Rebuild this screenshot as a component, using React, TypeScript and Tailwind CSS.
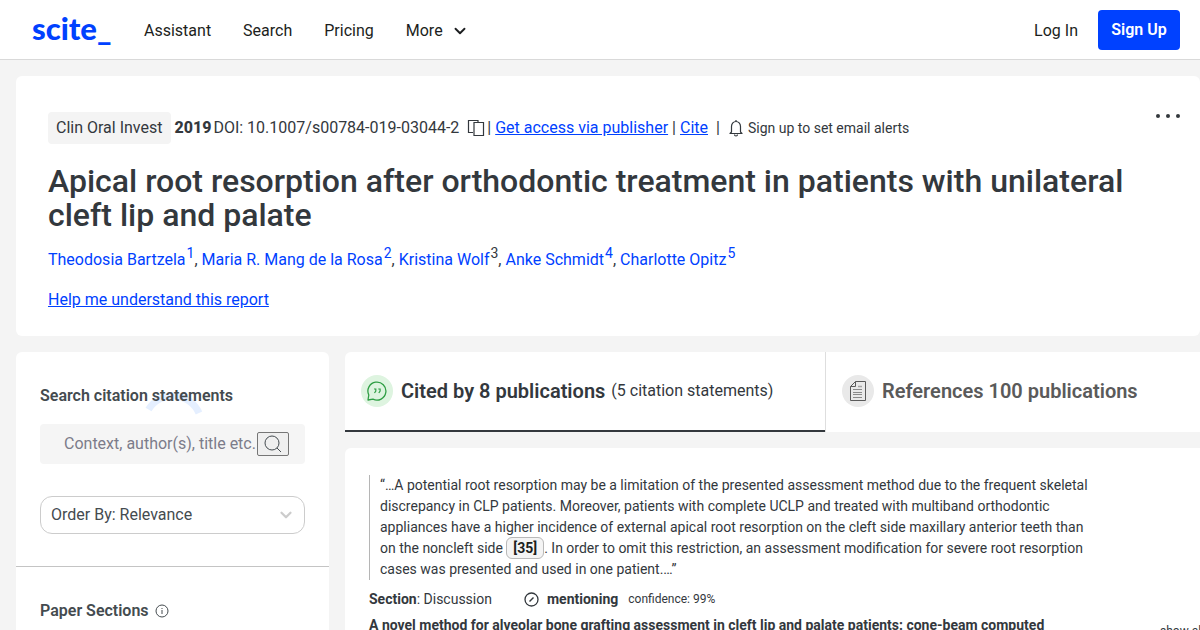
import { ChevronDown } from 'lucide-react';

const navLinks = ['Assistant', 'Search', 'Pricing'];

const authors = [
  { name: 'Theodosia Bartzela', ref: '1', linked: true },
  { name: 'Maria R. Mang de la Rosa', ref: '2', linked: true },
  { name: 'Kristina Wolf', ref: '3', linked: false },
  { name: 'Anke Schmidt', ref: '4', linked: true },
  { name: 'Charlotte Opitz', ref: '5', linked: true },
];

export default function App() {
  return (
    <div className="min-h-screen bg-[#f4f4f4] font-['Roboto',sans-serif] text-base text-[#33383d]">
      <Header />
      <main className="flex flex-col gap-4 pt-4 pl-4">
        <PaperCard />
        <div className="flex gap-4">
          <Sidebar />
          <section className="flex min-w-0 flex-1 flex-col gap-4">
            <Tabs />
            <Citation />
          </section>
        </div>
      </main>
    </div>
  );
}

function Header() {
  return (
    <header className="flex h-[60px] items-center border-b border-[#d9d9d9] bg-white pr-5 pl-8 text-[#1c1e20]">
      <a href="#" className="mr-8 w-20 pb-1 font-['Lato',sans-serif] text-[31px] leading-8 font-black text-[#0041ff]">
        scite_
      </a>
      <nav className="flex flex-1 items-center gap-8 pt-[2px]">
        {navLinks.map((label) => (
          <a key={label} href="#">
            {label}
          </a>
        ))}
        <button className="flex items-center gap-2">
          More
          <ChevronDown size={18} strokeWidth={2.5} />
        </button>
      </nav>
      <a href="#" className="mr-5 pt-[2px]">
        Log In
      </a>
      <button className="h-10 w-[82px] rounded bg-[#0041ff] font-semibold text-white">Sign Up</button>
    </header>
  );
}

function PaperCard() {
  return (
    <section className="rounded-md bg-white px-8 pt-9 pb-6">
      <div className="flex items-center">
        <span className="mr-1 rounded bg-[#f4f4f4] px-2 py-1">Clin Oral Invest</span>
        <strong className="mr-[2px] font-extrabold">2019</strong>
        <span>DOI: 10.1007/s00784-019-03044-2</span>
        <button className="ml-2" aria-label="Copy DOI">
          <CopyIcon />
        </button>
        <span className="mr-1 ml-[2px]">|</span>
        <a href="#" className="text-[#0041ff] underline">
          Get access via publisher
        </a>
        <span className="mx-1">|</span>
        <a href="#" className="text-[#0041ff] underline">
          Cite
        </a>
        <span className="mx-2">|</span>
        <button className="flex items-center gap-1 text-sm">
          <BellIcon />
          Sign up to set email alerts
        </button>
        <button className="-mr-3 mb-6 ml-auto" aria-label="More options">
          <svg width="24" height="4" viewBox="0 0 24 4" fill="#33383d">
            <circle cx="2" cy="2" r="2" />
            <circle cx="12" cy="2" r="2" />
            <circle cx="22" cy="2" r="2" />
          </svg>
        </button>
      </div>
      <h1 className="mt-5 text-[32px] leading-[34px] font-medium">
        Apical root resorption after orthodontic treatment in patients with unilateral cleft lip and palate
      </h1>
      <p className="mt-4 leading-6">
        {authors.map((a, i) => (
          <span key={a.name}>
            {i > 0 && ', '}
            <a href="#" className="text-[#0041ff]">
              {a.name}
            </a>
            <sup className={a.linked ? 'ml-px text-sm leading-none text-[#0041ff]' : 'ml-px text-sm leading-none'}>
              {a.ref}
            </sup>
          </span>
        ))}
      </p>
      <a href="#" className="mt-4 inline-block leading-6 text-[#0041ff] underline">
        Help me understand this report
      </a>
    </section>
  );
}

function Sidebar() {
  return (
    <aside className="w-[313px] shrink-0 rounded-md bg-white text-[#444b4f]">
      <div className="relative px-6 pt-8 pb-8">
        <svg className="absolute top-10 left-32" width="62" height="26" viewBox="0 0 62 26" fill="none">
          <path d="M4.500 17.500A28.500 28.500 0 0 1 55 21" stroke="#e5efff" strokeWidth="7" />
        </svg>
        <label htmlFor="search" className="relative block leading-6 font-semibold">
          Search citation statements
        </label>
        <div className="relative mt-4 flex h-10 items-center rounded bg-[#f5f5f5] pr-4 pl-6">
          <input
            id="search"
            className="w-full min-w-0 flex-1 bg-transparent outline-none placeholder:text-[#7c7c8a]"
            placeholder="Context, author(s), title etc."
          />
          <button
            className="flex h-6 w-8 items-center justify-center rounded-xs border border-[#767676] bg-[#efefef]"
            aria-label="Search"
          >
            <svg width="18" height="18" viewBox="0 0 18 18" fill="none" stroke="#444b4f">
              <circle cx="8" cy="8" r="7" />
              <path d="M13 13l4 4" />
            </svg>
          </button>
        </div>
        <div className="relative mt-8">
          <select
            aria-label="Order results"
            className="h-[38px] w-full appearance-none rounded-xl border border-[#ccc] bg-white px-[10px]"
          >
            <option>Order By: Relevance</option>
          </select>
          <ChevronDown
            size={18}
            strokeWidth={3}
            className="pointer-events-none absolute top-[10px] right-[10px] text-[#ccc]"
          />
        </div>
      </div>
      <div className="flex items-center gap-[6px] border-t border-[#c4c4c4] px-6 py-8">
        <h2 className="leading-6 font-semibold">Paper Sections</h2>
        <svg width="14" height="14" viewBox="0 0 14 14" fill="none" stroke="#444b4f">
          <circle cx="7" cy="7" r="6" />
          <path d="M7 6v4M7 4v1" />
        </svg>
      </div>
    </aside>
  );
}

function Tabs() {
  return (
    <div className="flex h-20" role="tablist">
      <button
        role="tab"
        aria-selected="true"
        className="flex basis-[480px] items-center rounded-tl-md border-b-2 border-[#33383d] bg-white pl-4"
      >
        <span className="mr-2 flex size-8 items-center justify-center rounded-full bg-[#def4e0]">
          <QuoteIcon />
        </span>
        <span className="mr-[6px] text-xl font-semibold">Cited by 8 publications</span>
        <span>(5 citation statements)</span>
      </button>
      <button
        role="tab"
        aria-selected="false"
        className="flex flex-1 items-center border-l border-[#dedede] bg-white pb-[2px] pl-4 text-[#5a5a5a]"
      >
        <span className="mr-2 flex size-8 items-center justify-center rounded-full bg-[#e9e9e9]">
          <DocumentIcon />
        </span>
        <span className="text-xl font-semibold">References 100 publications</span>
      </button>
    </div>
  );
}

function Citation() {
  return (
    <article className="rounded-l-md bg-white px-6 pt-[27px] pb-6 text-sm">
      <blockquote className="border-l border-[#b5b5b5] pl-[10px] leading-[21px]">
        “…A potential root resorption may be a limitation of the presented assessment method due to the frequent skeletal
        <br />
        discrepancy in CLP patients. Moreover, patients with complete UCLP and treated with multiband orthodontic
        <br />
        appliances have a higher incidence of external apical root resorption on the cleft side maxillary anterior teeth than
        <br />
        on the noncleft side{' '}
        <a href="#" className="rounded-md border border-[#b9b9b9] bg-[#f4f4f4] px-[6px] py-[2px] font-bold text-[#1c1e20]">
          [35]
        </a>
        . In order to omit this restriction, an assessment modification for severe root resorption
        <br />
        cases was presented and used in one patient.…”
      </blockquote>
      <div className="mt-2 flex items-center leading-[22px]">
        <span className="mr-8">
          <strong>Section</strong>: Discussion
        </span>
        <svg className="mr-2" width="15" height="15" viewBox="0 0 15 15" fill="none" stroke="#33383d">
          <circle cx="7.500" cy="7.500" r="6.500" strokeWidth="1.300" />
          <path d="M5.500 9.500l4-4" strokeWidth="1.500" />
        </svg>
        <strong className="mr-[10px]">mentioning</strong>
        <span className="text-xs">confidence: 99%</span>
      </div>
      <div className="mt-1 flex items-start">
        <a href="#" className="max-w-[720px] leading-[22px] font-bold">
          A novel method for alveolar bone grafting assessment in cleft lip and palate patients: cone-beam computed
          tomography evaluation
        </a>
        <button className="mt-[9px] -mr-6 ml-auto w-10 shrink-0 overflow-hidden text-left text-xs whitespace-nowrap">
          show all
        </button>
      </div>
    </article>
  );
}

function CopyIcon() {
  return (
    <svg width="18" height="18" viewBox="0 0 18 18" fill="none" stroke="#33383d" strokeWidth="1.200">
      <path d="M6 13.500H1.500v-12h9.500v2" />
      <path d="M7 3.500h9.500v13H7z" />
    </svg>
  );
}

function BellIcon() {
  return (
    <svg width="16" height="18" viewBox="0 0 16 18" fill="none" stroke="#33383d" strokeLinejoin="round">
      <path d="M8 1v1.500M3.500 13V7.500a4.500 5 0 0 1 9 0V13l1.500 1.500H2z" strokeWidth="1.200" />
      <path d="M6.500 15.500a1.500 1.500 0 0 0 3 0" strokeWidth="1.200" />
    </svg>
  );
}

function QuoteIcon() {
  return (
    <svg width="20" height="20" viewBox="0 0 20 20" fill="none" stroke="#2f9e44">
      <path d="M1 19l.8-5A9 9 0 1 1 6 18.200z" strokeWidth="1.300" strokeLinejoin="round" />
      <path d="M7 8h1.800v2L7.500 12M11.300 8h1.800v2l-1.300 2" strokeWidth="1.200" />
    </svg>
  );
}

function DocumentIcon() {
  return (
    <svg width="16" height="20" viewBox="0 0 16 20" fill="none" stroke="#5a5a5a">
      <path d="M5.500 .5h10v19H.5v-14zM5.500 .5v5h-5" />
      <path d="M8 5.500h4" stroke="#a5a5a5" strokeWidth="1.500" />
      <path d="M3 8.500h9M3 11.500h9M3 13.500h9M3 16.500h9" stroke="#8a8a8a" />
    </svg>
  );
}
